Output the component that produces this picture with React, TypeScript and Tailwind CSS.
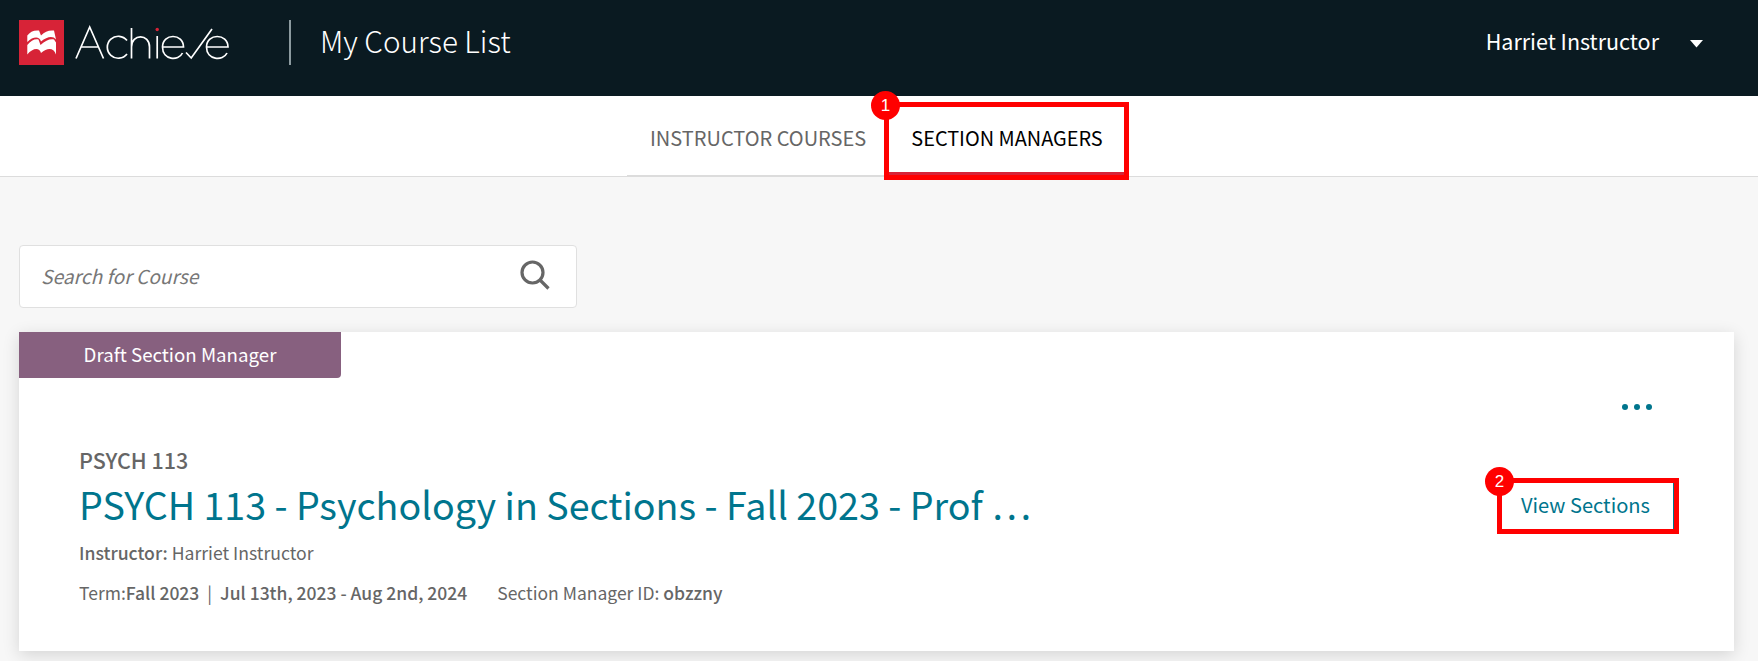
const tabs = [
  { name: 'INSTRUCTOR COURSES', active: false },
  { name: 'SECTION MANAGERS', active: true },
];

function Logo() {
  return (
    <svg width="212" height="45" viewBox="0 0 212 45" fill="none">
      <rect width="45" height="45" fill="#d72337" />
      <path
        d="M8.300 15.500C11 12 14.500 10 20 10.500L22 15.500C26 11.500 29.500 10 35 10.500L37 19.500C34 15.500 28 16.500 22 21.500C20.500 16 14 16.500 8.300 22Z"
        fill="#fff"
      />
      <path
        d="M8.300 25C12 20.500 15.500 18.800 19.500 19.500L21.500 25C26.500 20.500 30.500 18.800 35 19.500L37 22.500V34.500C34.500 27.500 28.500 27.500 22 33C20.500 27 13.500 28 8.300 34.500Z"
        fill="#fff"
      />
      <g stroke="#fff" strokeWidth="1.7">
        <path d="M57 38.500L70.700 7L84.500 38.500M61.500 27H80" />
        <path d="M108 20.500A11 11 0 1 0 108 34" />
        <path d="M112.500 8V38.500M112.500 27C112.500 13.500 130.500 13.500 130.500 27V38.500M138.200 16V38.500" />
        <path d="M143.500 27H164.500C164.500 13 143.500 13 143.500 27C143.500 40 159.500 41.500 163.500 33" />
        <path d="M167 32.500L172.200 38L193 9" />
        <path d="M187.500 27H209C209 13 187.500 13 187.500 27C187.500 40 204 41.500 208 33" />
      </g>
      <circle cx="138.200" cy="9.500" r="1.700" fill="#d72337" />
    </svg>
  );
}

function Header() {
  return (
    <header className="flex h-24 items-start bg-[#0a1a21] pt-5 pl-[19px] text-white">
      <Logo />
      <div className="ml-[58px] h-[45px] w-0.5 bg-[#8c9a9f]" />
      <h1 className="ml-[29px] text-[29.6px] leading-[41px] font-light whitespace-nowrap">My Course List</h1>
      <button className="mr-[55px] ml-auto flex h-[45px] items-center gap-[31px] text-[21.5px] whitespace-nowrap">
        <span className="-mt-0.5">Harriet Instructor</span>
        <svg className="mt-[3px]" width="13" height="8" viewBox="0 0 13 8">
          <path d="M0 0H13L6.500 7.500Z" fill="#fff" />
        </svg>
      </button>
    </header>
  );
}

function Tabs() {
  return (
    <nav className="flex h-[81px] border-b border-[#dcdcdc] bg-white pl-[627px]">
      {tabs.map((tab) =>
        tab.active ? (
          <div key={tab.name} className="relative flex h-[80px] w-[245px] justify-center">
            <span className="pt-[22px] pl-px text-[19.9px] leading-[40px] whitespace-nowrap text-black">{tab.name}</span>
            <div className="absolute top-[6px] left-0 h-[78px] w-[245px] border-5 border-[#ff0000]">
              <div className="mt-[65px] h-[3px] bg-[#d72337]" />
            </div>
            <Marker n={1} className="-top-[5px] -left-[13px]" />
          </div>
        ) : (
          <div key={tab.name} className="h-[80px] w-[257px] border-b border-[#dcdcdc] pt-[22px] pl-[23px]">
            <span className="text-[20px] leading-[40px] whitespace-nowrap text-[#666]">{tab.name}</span>
          </div>
        )
      )}
    </nav>
  );
}

function Marker({ n, className }: { n: number; className: string }) {
  return (
    <span
      className={`absolute flex size-[29px] items-center justify-center rounded-full bg-[#ff0000] font-['Liberation_Sans'] text-[17px] leading-none text-white ${className}`}
    >
      {n}
    </span>
  );
}

function Search() {
  return (
    <div className="flex h-[63px] w-[558px] items-center justify-between rounded-[4px] border border-[#e0e0e0] bg-white pr-[26px] pl-[21px]">
      <span className="text-[19.2px] whitespace-nowrap text-[#777] italic">Search for Course</span>
      <svg className="-mt-[3px]" width="30" height="30" viewBox="0 0 30 30" fill="none" stroke="#666" strokeWidth="3.200">
        <circle cx="12.500" cy="12.500" r="10.500" />
        <path d="M20 20L28.500 28.500" />
      </svg>
    </div>
  );
}

function CourseCard() {
  return (
    <article className="mt-6 h-[319px] w-[1715px] bg-white shadow-[0_4px_16px_rgba(0,0,0,0.14)]">
      <div className="flex h-[46px] w-[322px] items-center justify-center rounded-br-[4px] bg-[#87607f] pb-px text-[18.7px] whitespace-nowrap text-white">
        Draft Section Manager
      </div>
      <div className="flex justify-between pl-[60px]">
        <div className="pt-[68px] whitespace-nowrap text-[#666]">
          <div className="text-[21.5px] leading-[28px] font-medium">PSYCH 113</div>
          <h2 className="mt-[2px] text-[37.62px] leading-[56px] text-[#00758d]">
            PSYCH 113 - Psychology in Sections - Fall 2023 - Prof …
          </h2>
          <p className="mt-[8px] text-[17.6px] leading-[26px]">
            <b className="font-medium">Instructor:</b> Harriet Instructor
          </p>
          <p className="mt-[14px] flex text-[17.5px] leading-[26px]">
            <span>Term:</span>
            <b className="font-medium">Fall 2023</b>
            <span className="mx-[8px]">|</span>
            <b className="font-medium">Jul 13th, 2023 - Aug 2nd, 2024</b>
            <span className="ml-[30px]">
              Section Manager ID: <b className="font-medium">obzzny</b>
            </span>
          </p>
        </div>
        <div className="mr-[55px] flex flex-col items-end pt-[26px]">
          <svg className="mr-[27px]" width="30" height="6" viewBox="0 0 30 6" fill="#00758d">
            <circle cx="3" cy="3" r="3" />
            <circle cx="15" cy="3" r="3" />
            <circle cx="27" cy="3" r="3" />
          </svg>
          <button className="relative mt-[68px] h-[56px] w-[182px] border-5 border-[#ff0000] text-[20.1px] whitespace-nowrap text-[#00758d]">
            <span className="flex h-full items-center border-r border-[#00758d] pb-[2px] pl-[19px]">View Sections</span>
            <Marker n={2} className="-top-[16px] -left-[17px]" />
          </button>
        </div>
      </div>
    </article>
  );
}

export default function App() {
  return (
    <div className="h-[661px] w-[1758px] overflow-hidden bg-[#f7f7f7] font-['Noto_Sans_CJK_SC',sans-serif]">
      <Header />
      <Tabs />
      <main className="pt-[68px] pl-[19px]">
        <Search />
        <CourseCard />
      </main>
    </div>
  );
}
